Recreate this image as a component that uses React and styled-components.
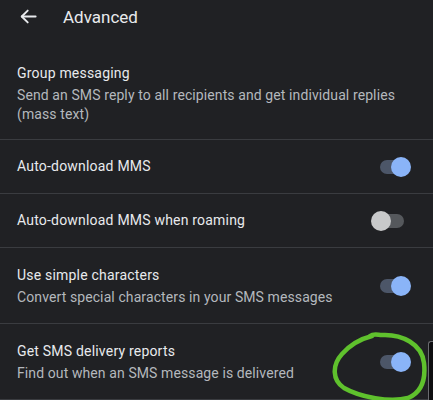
import React from 'react'
import styled, { createGlobalStyle } from 'styled-components'

const GlobalStyle = createGlobalStyle`
  html, body {
    margin: 0;
    padding: 0;
    background: #202124;
  }
  body {
    font-family: Roboto, 'Noto Sans', sans-serif;
  }
`

const settings = [
  {
    title: 'Group messaging',
    subtitle: 'Send an SMS reply to all recipients and get individual replies (mass text)',
  },
  { title: 'Auto-download MMS', toggle: true, on: true },
  { title: 'Auto-download MMS when roaming', toggle: true, on: false },
  {
    title: 'Use simple characters',
    subtitle: 'Convert special characters in your SMS messages',
    toggle: true,
    on: true,
  },
  {
    title: 'Get SMS delivery reports',
    subtitle: 'Find out when an SMS message is delivered',
    toggle: true,
    on: true,
    circled: true,
  },
]

const Switch = ({ on }) => (
  <Track $on={on}>
    <Thumb $on={on} />
  </Track>
)

export default function App() {
  return (
    <>
      <GlobalStyle />
      <Screen>
        <Header>
          <BackButton>
            <svg width="19" height="19" viewBox="0 0 24 24" fill="none" stroke="#e8eaed" strokeWidth="2.4" strokeLinecap="round" strokeLinejoin="round">
              <path d="M21 12H3.5" />
              <path d="M11 4.5 3.5 12l7.5 7.5" />
            </svg>
          </BackButton>
          <HeaderTitle>Advanced</HeaderTitle>
        </Header>
        <List>
          {settings.map((s, i) => (
            <Row key={s.title} $tall={!!s.subtitle} $first={i === 0}>
              <Texts>
                <Title>{s.title}</Title>
                {s.subtitle && <Subtitle>{s.subtitle}</Subtitle>}
              </Texts>
              {s.toggle && (
                <SwitchWrap>
                  <Switch on={s.on} />
                  {/* hand-drawn green loop around the switch */}
                  {s.circled && (
                    <Scribble width="100" height="72" viewBox="0 0 100 72" fill="none">
                      <path
                        d="M40 5 C44 2 48 4 52 4 C72 3 92 13 94 32 C96 50 90 62 78 67 C60 72 30 66 14 57 C2 49 2 34 12 23 C20 14 30 8 42 5"
                        stroke="#5fc12d"
                        strokeWidth="4.5"
                        strokeLinecap="round"
                        strokeLinejoin="round"
                      />
                    </Scribble>
                  )}
                </SwitchWrap>
              )}
            </Row>
          ))}
        </List>
        <EdgeTab />
      </Screen>
    </>
  )
}

const Screen = styled.div`
  width: 433px;
  height: 400px;
  background: #202124;
  overflow: hidden;
  position: relative;
`

const Header = styled.div`
  display: flex;
  align-items: center;
  height: 33px;
  padding-left: 19px;
`

const BackButton = styled.div`
  display: flex;
  align-items: center;
  width: 44px;
`

const HeaderTitle = styled.div`
  color: #e8eaed;
  font-size: 17px;
`

const List = styled.div`
  margin-top: 18px;
  display: flex;
  flex-direction: column;
`

const Row = styled.div`
  display: flex;
  align-items: center;
  justify-content: space-between;
  padding: ${(p) => (p.$first ? '12px 12px 15px 17px' : p.$tall ? '12px 29px 12px 17px' : '0 29px 0 17px')};
  min-height: ${(p) => (p.$tall ? '51px' : '53px')};
  border-bottom: 1px solid #3a3c40;
`

const Texts = styled.div`
  display: flex;
  flex-direction: column;
  gap: 2px;
`

const Title = styled.div`
  color: #e8eaed;
  font-size: 14px;
  line-height: 20px;
  letter-spacing: 0.2px;
  margin-bottom: 1px;
`

const Subtitle = styled.div`
  color: #b4b8bd;
  font-size: 14px;
  line-height: 19px;
  letter-spacing: 0.1px;
`

const SwitchWrap = styled.div`
  position: relative;
  flex-shrink: 0;
  margin-left: 16px;
`

const Track = styled.div`
  position: relative;
  width: 24px;
  height: 14px;
  border-radius: 7px;
  background: ${(p) => (p.$on ? '#4c5668' : '#55585c')};
`

const Thumb = styled.div`
  position: absolute;
  top: -3px;
  left: ${(p) => (p.$on ? '11px' : '-9px')};
  width: 20px;
  height: 20px;
  border-radius: 50%;
  background: ${(p) => (p.$on ? '#8ab4f8' : '#c8c9ca')};
`

const Scribble = styled.svg`
  position: absolute;
  left: -50px;
  top: -24px;
`

const EdgeTab = styled.div`
  position: absolute;
  left: 428px;
  top: 341px;
  width: 8px;
  height: 70px;
  background: #0e0e10;
  border-left: 1px solid #6a6c70;
  border-top: 1px solid #6a6c70;
  border-top-left-radius: 3px;
`
